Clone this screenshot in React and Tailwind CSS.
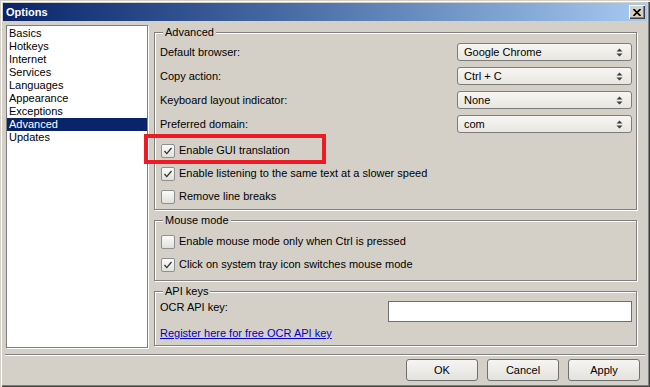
import React from 'react';

const sections = ['Basics', 'Hotkeys', 'Internet', 'Services', 'Languages', 'Appearance', 'Exceptions', 'Advanced', 'Updates'];

const combos = [
    { label: 'Default browser:', value: 'Google Chrome' },
    { label: 'Copy action:', value: 'Ctrl + C' },
    { label: 'Keyboard layout indicator:', value: 'None' },
    { label: 'Preferred domain:', value: 'com' },
];

const Combo = ({ value }) => (
    <div className="flex h-[18px] w-[175px] items-center justify-between rounded-[3px] border border-[#7c7c7c] bg-linear-to-b from-[#f7f6f3] to-[#e8e6e0] pl-[6px] pr-[8px]">
        <span>{value}</span>
        <svg width="7" height="9" viewBox="0 0 7 9">
            <path d="M3.5 0.5 L6.5 3.5 H0.5 Z M0.5 5.5 H6.5 L3.5 8.5 Z" fill="#3c3c3c" />
        </svg>
    </div>
);

const Check = ({ checked, label }) => (
    <div className="flex h-[23px] items-center gap-[4px] pl-[1px]">
        <span className="flex h-[14px] w-[14px] items-center justify-center rounded-[2px] border border-[#8e8f8f] bg-linear-to-b from-[#fbfbfb] to-[#e0e0dc]">
            {checked && (
                <svg width="12" height="12" viewBox="0 0 12 12">
                    <path d="M2.5 6 L4.8 8.6 L9.5 3" fill="none" stroke="#2e2e2e" strokeWidth="1.2" />
                </svg>
            )}
        </span>
        <span>{label}</span>
    </div>
);

const Group = ({ title, className = '', children }) => (
    <fieldset className={`border border-[#808080] shadow-[1px_1px_0_#ffffff,inset_1px_1px_0_#ffffff] ${className}`}>
        <legend className="ml-[8px] bg-[#d4d0c8] px-[2px] leading-[13px]">{title}</legend>
        {children}
    </fieldset>
);

const Button = ({ children }) => (
    <button className="flex h-[22px] w-[72px] items-center justify-center rounded-[3px] border border-[#707070] bg-linear-to-b from-[#f5f5f3] to-[#e3e2dd] text-black">
        {children}
    </button>
);

export default function App() {
    return (
        <div className="relative flex h-[387px] w-[650px] flex-col bg-[#d4d0c8] p-[3px] font-['Liberation_Sans',Arial,sans-serif] text-[11px] leading-[13px] text-black shadow-[inset_1px_1px_0_#d4d0c8,inset_2px_2px_0_#ffffff,inset_-1px_-1px_0_#404040,inset_-2px_-2px_0_#808080]">
            {/* Title bar */}
            <div className="flex h-[18px] items-center justify-between bg-linear-to-r from-[#0a246a] to-[#a6caf0] pl-[3px] pr-[2px]">
                <span className="font-bold text-white">Options</span>
                <button className="flex h-[14px] w-[16px] items-center justify-center bg-[#d4d0c8] shadow-[inset_1px_1px_0_#ffffff,inset_-1px_-1px_0_#404040,inset_-2px_-2px_0_#808080]">
                    <svg width="8" height="7" viewBox="0 0 8 7">
                        <path d="M0.5 0 L7.5 7 M7.5 0 L0.5 7" stroke="#000" strokeWidth="1.6" />
                    </svg>
                </button>
            </div>

            <div className="mt-[4px] flex gap-[6px] pl-[3px]">
                {/* Section list */}
                <div className="h-[323px] w-[142px] border border-[#7f7f7f] bg-white pt-[1px] shadow-[1px_1px_0_#ffffff]">
                    {sections.map((s) => (
                        <div
                            key={s}
                            className={`h-[13px] pl-[2px] ${s === 'Advanced' ? 'bg-[#0a246a] text-white' : ''}`}
                        >
                            {s}
                        </div>
                    ))}
                </div>

                {/* Settings */}
                <div className="mt-[1px] flex w-[483px] flex-col gap-[4px]">
                    <Group title="Advanced">
                        <div className="pl-[5px] pr-[4px] pt-[4px] pb-[1px]">
                            <div className="flex flex-col gap-[6px]">
                                {combos.map((c) => (
                                    <div key={c.label} className="flex items-center justify-between">
                                        <span>{c.label}</span>
                                        <Combo value={c.value} />
                                    </div>
                                ))}
                            </div>
                            <div className="mt-[6px]">
                                <Check checked label="Enable GUI translation" />
                                <Check checked label="Enable listening to the same text at a slower speed" />
                                <Check label="Remove line breaks" />
                            </div>
                        </div>
                    </Group>

                    <Group title="Mouse mode">
                        <div className="pl-[5px] pt-[3px] pb-[4px]">
                            <Check label="Enable mouse mode only when Ctrl is pressed" />
                            <Check checked label="Click on system tray icon switches mouse mode" />
                        </div>
                    </Group>

                    <Group title="API keys">
                        <div className="pl-[5px] pr-[4px] pt-[3px] pb-[5px]">
                            <div className="flex items-start justify-between">
                                <span>OCR API key:</span>
                                <div className="h-[21px] w-[244px] border border-[#6e6e6e] bg-white" />
                            </div>
                            <a className="mt-[5px] block w-fit text-[#0000cc] underline">Register here for free OCR API key</a>
                        </div>
                    </Group>
                </div>
            </div>

            <div className="mx-[2px] mt-[6px] h-[2px] border-t border-b border-t-[#808080] border-b-white" />

            <div className="mt-[3px] flex justify-end gap-[9px] pr-[7px]">
                <Button>OK</Button>
                <Button>Cancel</Button>
                <Button>Apply</Button>
            </div>

            {/* highlight annotation */}
            <div className="pointer-events-none absolute left-[144px] top-[134px] h-[30px] w-[182px] border-[4px] border-[#ed1c24]" />
        </div>
    );
}
